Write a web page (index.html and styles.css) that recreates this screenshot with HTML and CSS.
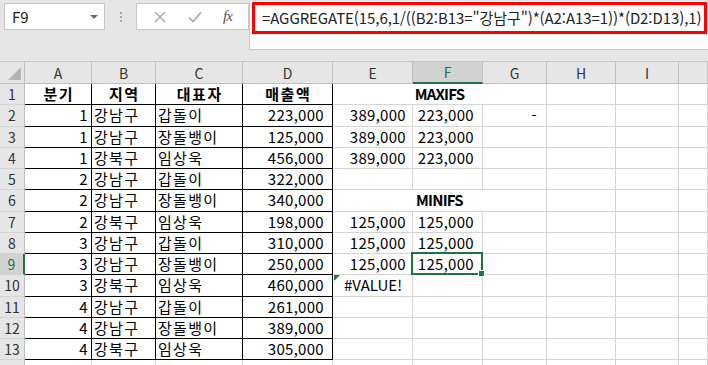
FILE: index.html
```html
<!DOCTYPE html>
<html lang="ko">
<head>
<meta charset="UTF-8" />
<title>AGGREGATE - 조건부 최소값</title>
<link rel="stylesheet" href="styles.css">
</head>
<body>
<div class="toolbar">
  <div class="namebox">
    <span>F9</span>
    <span class="caret"></span>
  </div>
  <div class="grip"><i></i><i></i><i></i></div>
  <div class="btns">
    <svg width="14" height="14" viewBox="0 0 14 14"><path d="M2 2L12 12M12 2L2 12" stroke="#a6a6a6" stroke-width="1.4" fill="none"/></svg>
    <svg width="16" height="14" viewBox="0 0 16 14"><path d="M2 7.5L6 11.5L14 2.5" stroke="#a6a6a6" stroke-width="1.6" fill="none"/></svg>
    <span class="fx">fx</span>
  </div>
  <div class="formula">
    <div class="formula-text">=AGGREGATE(15,6,1/((B2:B13="강남구")*(A2:A13=1))*(D2:D13),1)</div>
  </div>
</div>

<table class="sheet">
  <colgroup>
    <col style="width:25px"><col style="width:67px"><col style="width:64px"><col style="width:87px">
    <col style="width:90px"><col style="width:80px"><col style="width:70px"><col style="width:64px">
    <col style="width:69px"><col style="width:63px"><col style="width:29px">
  </colgroup>
  <tr class="heads">
    <th class="corner"><span class="tri"></span></th>
    <th>A</th><th>B</th><th>C</th><th>D</th><th>E</th><th class="on">F</th><th>G</th><th>H</th><th>I</th><th></th>
  </tr>
  <tr>
    <th class="rn">1</th>
    <td class="b hd">분기</td><td class="b hd">지역</td><td class="b hd">대표자</td><td class="b hd">매출액</td>
    <td class="title" colspan="3">MAXIFS</td><td></td><td></td><td></td>
  </tr>
  <tr>
    <th class="rn">2</th>
    <td class="b n">1</td><td class="b">강남구</td><td class="b">갑돌이</td><td class="b n d">223,000</td>
    <td class="n e">389,000</td><td class="n f">223,000</td><td class="n g">-</td><td></td><td></td><td></td>
  </tr>
  <tr>
    <th class="rn">3</th>
    <td class="b n">1</td><td class="b">강남구</td><td class="b">장돌뱅이</td><td class="b n d">125,000</td>
    <td class="n e">389,000</td><td class="n f">223,000</td><td></td><td></td><td></td><td></td>
  </tr>
  <tr>
    <th class="rn">4</th>
    <td class="b n">1</td><td class="b">강북구</td><td class="b">임상욱</td><td class="b n d">456,000</td>
    <td class="n e">389,000</td><td class="n f">223,000</td><td></td><td></td><td></td><td></td>
  </tr>
  <tr>
    <th class="rn">5</th>
    <td class="b n">2</td><td class="b">강남구</td><td class="b">갑돌이</td><td class="b n d">322,000</td>
    <td></td><td></td><td></td><td></td><td></td><td></td>
  </tr>
  <tr>
    <th class="rn">6</th>
    <td class="b n">2</td><td class="b">강남구</td><td class="b">장돌뱅이</td><td class="b n d">340,000</td>
    <td class="title" colspan="3">MINIFS</td><td></td><td></td><td></td>
  </tr>
  <tr>
    <th class="rn">7</th>
    <td class="b n">2</td><td class="b">강북구</td><td class="b">임상욱</td><td class="b n d">198,000</td>
    <td class="n e">125,000</td><td class="n f">125,000</td><td></td><td></td><td></td><td></td>
  </tr>
  <tr>
    <th class="rn">8</th>
    <td class="b n">3</td><td class="b">강남구</td><td class="b">갑돌이</td><td class="b n d">310,000</td>
    <td class="n e">125,000</td><td class="n f">125,000</td><td></td><td></td><td></td><td></td>
  </tr>
  <tr>
    <th class="rn on">9</th>
    <td class="b n">3</td><td class="b">강남구</td><td class="b">장돌뱅이</td><td class="b n d">250,000</td>
    <td class="n e">125,000</td><td class="n f sel">125,000</td><td></td><td></td><td></td><td></td>
  </tr>
  <tr>
    <th class="rn">10</th>
    <td class="b n">3</td><td class="b">강북구</td><td class="b">임상욱</td><td class="b n d">460,000</td>
    <td class="err">#VALUE!</td><td></td><td></td><td></td><td></td><td></td>
  </tr>
  <tr>
    <th class="rn">11</th>
    <td class="b n">4</td><td class="b">강남구</td><td class="b">갑돌이</td><td class="b n d">261,000</td>
    <td></td><td></td><td></td><td></td><td></td><td></td>
  </tr>
  <tr>
    <th class="rn">12</th>
    <td class="b n">4</td><td class="b">강남구</td><td class="b">장돌뱅이</td><td class="b n d">389,000</td>
    <td></td><td></td><td></td><td></td><td></td><td></td>
  </tr>
  <tr>
    <th class="rn">13</th>
    <td class="b n">4</td><td class="b">강북구</td><td class="b">임상욱</td><td class="b n d">305,000</td>
    <td></td><td></td><td></td><td></td><td></td><td></td>
  </tr>
  <tr>
    <th class="rn"></th>
    <td></td><td></td><td></td><td></td><td></td><td></td><td></td><td></td><td></td><td></td>
  </tr>
</table>
</body>
</html>
```

FILE: styles.css
```css
* { box-sizing: border-box; }
html, body {
  margin: 0; padding: 0;
  width: 708px; height: 365px;
  overflow: hidden;
  background: #fff;
  font-family: "Noto Sans CJK KR", "Noto Sans", sans-serif;
}

/* Formula bar */
.toolbar {
  display: flex;
  height: 62px;
  padding: 3px 0 0 4px;
  background: #e6e6e6;
  border-bottom: 1px solid #c8c8c8;
}
.namebox {
  width: 101px; height: 27px;
  background: #fff;
  border: 1px solid #c6c6c6;
  display: flex; align-items: center; justify-content: space-between;
  padding: 0 6px 0 7px;
  font-size: 15px; color: #222;
}
.caret {
  width: 0; height: 0;
  border-left: 4px solid transparent;
  border-right: 4px solid transparent;
  border-top: 4px solid #666;
}
.grip {
  width: 31px; height: 27px;
  display: flex; flex-direction: column; align-items: center; justify-content: center; gap: 2px;
}
.grip i { width: 2px; height: 2px; background: #a8a8a8; }
.btns {
  width: 113px; height: 27px;
  background: #fff;
  border: 1px solid #c6c6c6;
  display: flex; align-items: center; justify-content: space-around;
  padding: 0 6px;
}
.fx {
  font-family: "Liberation Serif", serif;
  font-style: italic;
  font-size: 15px;
  color: #555;
  letter-spacing: -1px;
}
.formula {
  flex: 1;
  height: 49px;
  background: #fff;
  border-left: 1px solid #c6c6c6;
  border-bottom: 1px solid #c6c6c6;
  padding: 0 1px 0 2px;
  margin-top: -2px;
}
.formula-text {
  height: 32px;
  border: 3px solid #ff0000;
  margin-top: 1px;
  padding: 0 0 0 7px;
  font-size: 15px;
  line-height: 26px;
  color: #222;
  white-space: nowrap;
  overflow: hidden;
  letter-spacing: -0.08px;
}

/* Sheet grid */
.sheet {
  border-collapse: separate;
  border-spacing: 0;
  table-layout: fixed;
  width: 708px;
  font-size: 15px;
  color: #000;
}
.sheet tr { height: 21.25px; }
.sheet th, .sheet td {
  padding: 0 2px;
  border-right: 1px solid #d4d4d4;
  border-bottom: 1px solid #d4d4d4;
  white-space: nowrap;
  font-weight: 400;
  line-height: 20px;
}
.sheet td { letter-spacing: 1.3px; }
.heads th {
  background: #e6e6e6;
  border-right: 1px solid #c0c0c0;
  border-bottom: 1px solid #bdbdbd;
  font-size: 14px;
  color: #333;
  text-align: center;
}
.heads th.on {
  background: #d2d2d2;
  color: #217346;
  border-bottom: 2px solid #217346;
}
.corner { position: relative; }
.tri {
  position: absolute;
  right: 3px; bottom: 3px;
  width: 0; height: 0;
  border-left: 13px solid transparent;
  border-bottom: 13px solid #b4b4b4;
}
.rn {
  background: #e6e6e6;
  border-right: 1px solid #bdbdbd !important;
  font-size: 14px;
  color: #333;
  text-align: center;
}
.rn.on {
  background: #d2d2d2;
  color: #217346;
  border-right: 2px solid #217346 !important;
}

.sheet td.b { border-right-color: #000; border-bottom-color: #000; }
.sheet td.hd {
  font-weight: 700;
  letter-spacing: 1.6px;
  text-indent: 1.6px;
  text-align: center;
}
.sheet td.title {
  font-weight: 700;
  letter-spacing: -0.8px;
  text-align: center;
}
.sheet td.n { text-align: right; letter-spacing: 0.3px; padding-right: 3px; }
.sheet td.d { padding-right: 8px; }
.sheet td.e { padding-right: 6px; }
.sheet td.f { padding-right: 8px; }
.sheet td.g { padding-right: 9px; }
.sheet td.err {
  position: relative;
  letter-spacing: 0;
  padding-left: 11px;
}
.err::before {
  content: "";
  position: absolute;
  left: 1px; top: 0;
  width: 0; height: 0;
  border-top: 6px solid #1e7b32;
  border-right: 6px solid transparent;
}
.sel { position: relative; }
.sel::after {
  content: "";
  position: absolute;
  left: -2px; top: -2px; right: -1px; bottom: -1px;
  border: 2px solid #217346;
}
.sel::before {
  content: "";
  position: absolute;
  right: -3px; bottom: -3px;
  width: 5px; height: 5px;
  background: #217346;
  border: 1px solid #fff;
  z-index: 1;
}
```
